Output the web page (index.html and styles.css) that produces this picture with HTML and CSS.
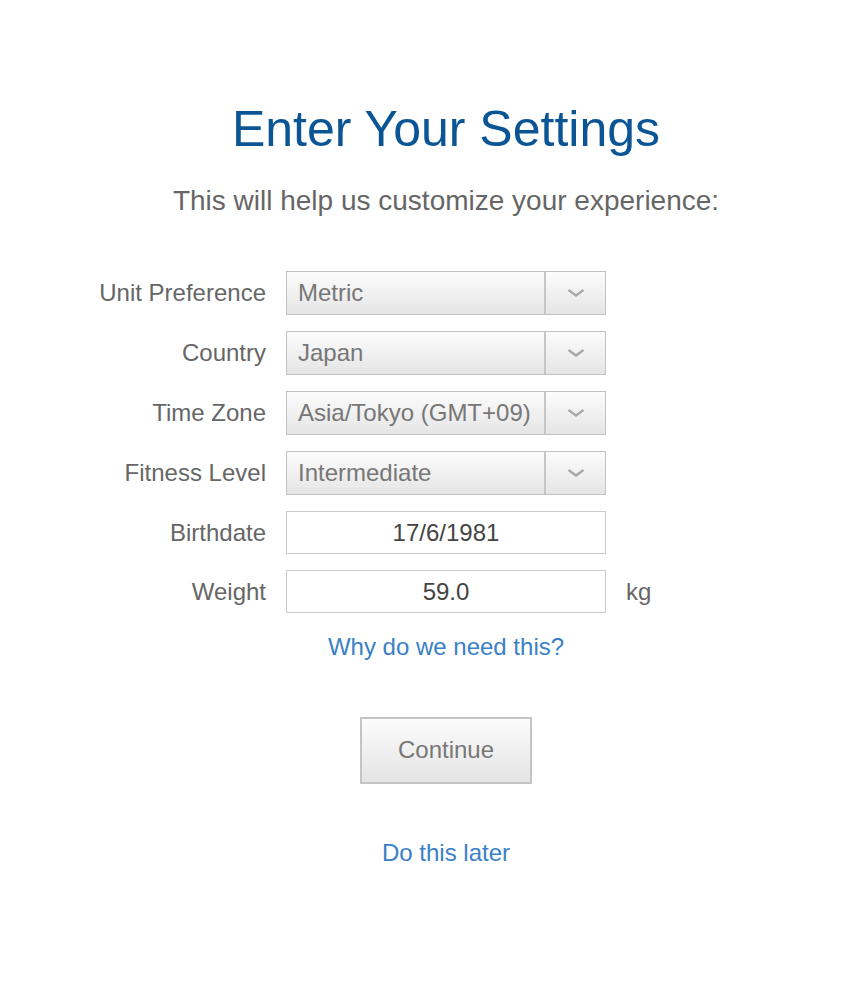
FILE: index.html
```html
<!DOCTYPE html>
<html lang="en">
<head>
<meta charset="utf-8">
<title>Enter Your Settings</title>
<link rel="stylesheet" href="styles.css">
</head>
<body>
<main class="page">
  <h1 class="title">Enter Your Settings</h1>
  <p class="subtitle">This will help us customize your experience:</p>
  <form class="form">
    <label class="label">Unit Preference</label>
    <div class="select"><span class="select-value">Metric</span><span class="select-arrow"><svg width="18" height="10" viewBox="0 0 18 10"><path d="M1.5 2 L9 7.5 L16.5 2" fill="none" stroke="#a9a9a9" stroke-width="2.4"/></svg></span></div>
    <span class="unit"></span>

    <label class="label">Country</label>
    <div class="select"><span class="select-value">Japan</span><span class="select-arrow"><svg width="18" height="10" viewBox="0 0 18 10"><path d="M1.5 2 L9 7.5 L16.5 2" fill="none" stroke="#a9a9a9" stroke-width="2.4"/></svg></span></div>
    <span class="unit"></span>

    <label class="label">Time Zone</label>
    <div class="select"><span class="select-value">Asia/Tokyo (GMT+09)</span><span class="select-arrow"><svg width="18" height="10" viewBox="0 0 18 10"><path d="M1.5 2 L9 7.5 L16.5 2" fill="none" stroke="#a9a9a9" stroke-width="2.4"/></svg></span></div>
    <span class="unit"></span>

    <label class="label">Fitness Level</label>
    <div class="select"><span class="select-value">Intermediate</span><span class="select-arrow"><svg width="18" height="10" viewBox="0 0 18 10"><path d="M1.5 2 L9 7.5 L16.5 2" fill="none" stroke="#a9a9a9" stroke-width="2.4"/></svg></span></div>
    <span class="unit"></span>

    <label class="label">Birthdate</label>
    <div class="input">17/6/1981</div>
    <span class="unit"></span>

    <label class="label">Weight</label>
    <div class="input">59.0</div>
    <span class="unit">kg</span>
  </form>
  <a class="link why" href="#">Why do we need this?</a>
  <div class="actions"><button class="button" type="button">Continue</button></div>
  <a class="link later" href="#">Do this later</a>
</main>
</body>
</html>
```
FILE: styles.css
```css
html, body {
  margin: 0;
  padding: 0;
  background: #ffffff;
}
body {
  font-family: "Liberation Sans", Arial, sans-serif;
  color: #666666;
}
.page {
  margin-left: 37px;
  padding-top: 104px;
  display: flex;
  flex-direction: column;
  align-items: center;
  text-align: center;
}
.title {
  margin: 0;
  font-size: 50px;
  line-height: 1;
  font-weight: normal;
  color: #0b5595;
}
.subtitle {
  margin: 33px 0 0;
  font-size: 28px;
  line-height: 1;
  color: #666666;
}
.form {
  margin-top: 56px;
  width: 100%;
  display: grid;
  grid-template-columns: 1fr 320px 1fr;
  column-gap: 20px;
  row-gap: 16px;
  align-items: center;
}
.label {
  justify-self: end;
  font-size: 24px;
  color: #666666;
}
.unit {
  justify-self: start;
  font-size: 24px;
  color: #666666;
}
.select {
  height: 44px;
  box-sizing: border-box;
  border: 1px solid #c2c2c2;
  background: linear-gradient(#fcfcfc, #e5e5e5);
  display: flex;
  align-items: stretch;
}
.select-value {
  flex: 1;
  display: flex;
  align-items: center;
  padding-left: 11px;
  font-size: 24px;
  color: #777777;
  text-align: left;
  white-space: nowrap;
}
.select-arrow {
  width: 59px;
  border-left: 2px solid #c6c6c6;
  display: flex;
  align-items: center;
  justify-content: center;
}
.input {
  height: 43px;
  box-sizing: border-box;
  border: 1px solid #cccccc;
  background: #ffffff;
  display: flex;
  align-items: center;
  justify-content: center;
  font-size: 24px;
  color: #444444;
}
.link {
  font-size: 24px;
  line-height: 1.2;
  color: #3a80c6;
  text-decoration: none;
}
.why {
  margin-top: 20px;
}
.actions {
  margin-top: 55px;
}
.button {
  width: 172px;
  height: 67px;
  box-sizing: border-box;
  border: 2px solid #c4c4c4;
  background: linear-gradient(#fcfcfc, #e4e4e4);
  font-family: "Liberation Sans", Arial, sans-serif;
  font-size: 24px;
  color: #777777;
  padding: 0;
}
.later {
  margin-top: 55px;
}
```
